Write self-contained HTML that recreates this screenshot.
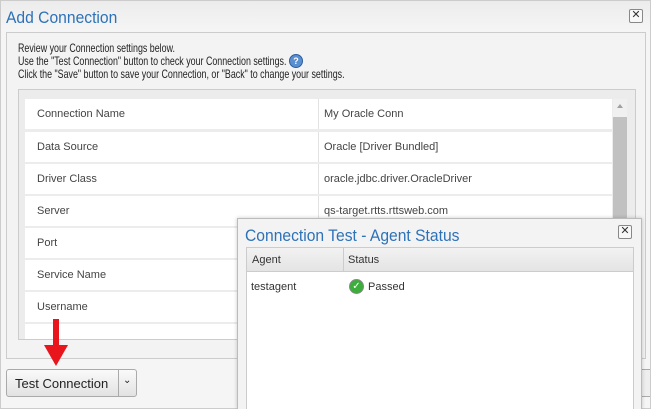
<html style="overflow:hidden"><head><style>
html,body{margin:0;width:651px;height:409px;overflow:hidden}
body{background:#fff;font-family:"Liberation Sans",sans-serif;position:relative}
.dlg{position:absolute;left:0;top:0;width:649px;height:407px;border:1px solid #ccc;background:linear-gradient(#ececec,#f5f5f5 30px,#f5f5f5);overflow:hidden}
.t{position:absolute;color:#2d72b8;font-size:17px;transform:scaleX(0.92);transform-origin:left top;white-space:nowrap}
.x{position:absolute;width:12px;height:12px;border:1px solid #888;border-radius:2px;background:#f8f8f8;font-size:11px;line-height:11px;text-align:center;color:#333}
.panel{position:absolute;left:5px;top:31px;width:638px;height:325px;border:1px solid #ccc;background:#f3f3f3}
.txt{position:absolute;left:17px;top:41px;font-size:12px;line-height:13px;color:#222;transform:scaleX(0.74);transform-origin:left top;white-space:nowrap}
.grid{position:absolute;left:17px;top:88px;width:616px;height:249px;border:1px solid #ccc;background:#ececec;overflow:hidden}
.row{position:absolute;left:6px;width:587px;height:30px;background:#fff;font-size:11px;color:#444}
.row span{position:absolute;top:9px}
.row i{position:absolute;left:293px;top:0;width:1px;height:30px;background:#e2e2e2}
.btn{position:absolute;left:5px;top:368px;width:129px;height:26px;border:1px solid #aaa;border-radius:3px;background:linear-gradient(#fafafa,#e2e2e2);font-size:13px;color:#222}
.pop{position:absolute;left:237px;top:218px;width:403px;height:190px;border:1px solid #bbb;border-bottom:0;background:#f3f3f3;box-shadow:0 0 4px rgba(0,0,0,.2);overflow:hidden}
.tb{position:absolute;left:8px;top:28px;width:386px;height:170px;border:1px solid #ccc;background:#fff}
</style></head><body>
<div class="dlg">
<div class="t" style="left:5px;top:7px">Add Connection</div>
<div class="x" style="left:628px;top:8px">✕</div>
<div class="panel"></div>
<div class="txt">Review your Connection settings below.<br>Use the "Test Connection" button to check your Connection settings.<br>Click the "Save" button to save your Connection, or "Back" to change your settings.</div>
<span style="position:absolute;left:288px;top:53px;width:12px;height:12px;border-radius:50%;background:#5b8fd0;border:1px solid #2c5f9e;color:#fff;font-size:9px;line-height:12px;text-align:center;font-weight:bold">?</span>
<div class="grid">
<div class="row" style="top:9px"><span style="left:12px">Connection Name</span><i></i><span style="left:299px">My Oracle Conn</span></div>
<div class="row" style="top:42px"><span style="left:12px">Data Source</span><i></i><span style="left:299px">Oracle [Driver Bundled]</span></div>
<div class="row" style="top:74px"><span style="left:12px">Driver Class</span><i></i><span style="left:299px">oracle.jdbc.driver.OracleDriver</span></div>
<div class="row" style="top:106px"><span style="left:12px">Server</span><i></i><span style="left:299px">qs-target.rtts.rttsweb.com</span></div>
<div class="row" style="top:138px"><span style="left:12px">Port</span><i></i></div>
<div class="row" style="top:170px"><span style="left:12px">Service Name</span><i></i></div>
<div class="row" style="top:202px"><span style="left:12px">Username</span><i></i></div>
<div class="row" style="top:234px"></div>
<div style="position:absolute;left:594px;top:9px;width:14px;height:240px;background:#f0f0f0"></div>
<div style="position:absolute;left:594px;top:27px;width:14px;height:222px;background:#c1c1c1"></div>
<div style="position:absolute;left:598px;top:14px;border:3px solid transparent;border-bottom:4px solid #a0a0a0;border-top:0"></div>
</div>
<div class="btn"><span style="position:absolute;left:8px;top:6px">Test Connection</span><div style="position:absolute;left:111px;top:0;width:1px;height:26px;background:#aaa"></div><span style="position:absolute;left:116px;top:5px;font-size:10px">⌄</span></div>
<svg style="position:absolute;left:40px;top:318px" width="28" height="48"><rect x="12" y="0" width="6" height="27" fill="#e8161c"/><polygon points="3,26 27,26 15,47" fill="#e8161c"/></svg>
<div style="position:absolute;left:638px;top:368px;width:12px;height:26px;border:1px solid #aaa;border-radius:3px;background:#eee"></div>
</div>
<div class="pop">
<div class="t" style="left:7px;top:7px">Connection Test - Agent Status</div>
<div class="x" style="left:380px;top:6px">✕</div>
<div class="tb">
<div style="height:23px;background:linear-gradient(#f2f2f2,#e4e4e4);border-bottom:1px solid #ccc;font-size:11px;color:#333;position:relative">
<span style="position:absolute;left:5px;top:6px">Agent</span><div style="position:absolute;left:96px;top:0;width:1px;height:23px;background:#ccc"></div><span style="position:absolute;left:101px;top:6px">Status</span></div>
<span style="position:absolute;left:4px;top:33px;font-size:11px;color:#333">testagent</span>
<span style="position:absolute;left:102px;top:31px;width:13px;height:13px;border-radius:50%;background:#3cae3c;border:1px solid #888;color:#fff;font-size:10px;line-height:13px;text-align:center">✓</span>
<span style="position:absolute;left:121px;top:33px;font-size:11px;color:#333">Passed</span>
</div>
</div>
</body></html>
